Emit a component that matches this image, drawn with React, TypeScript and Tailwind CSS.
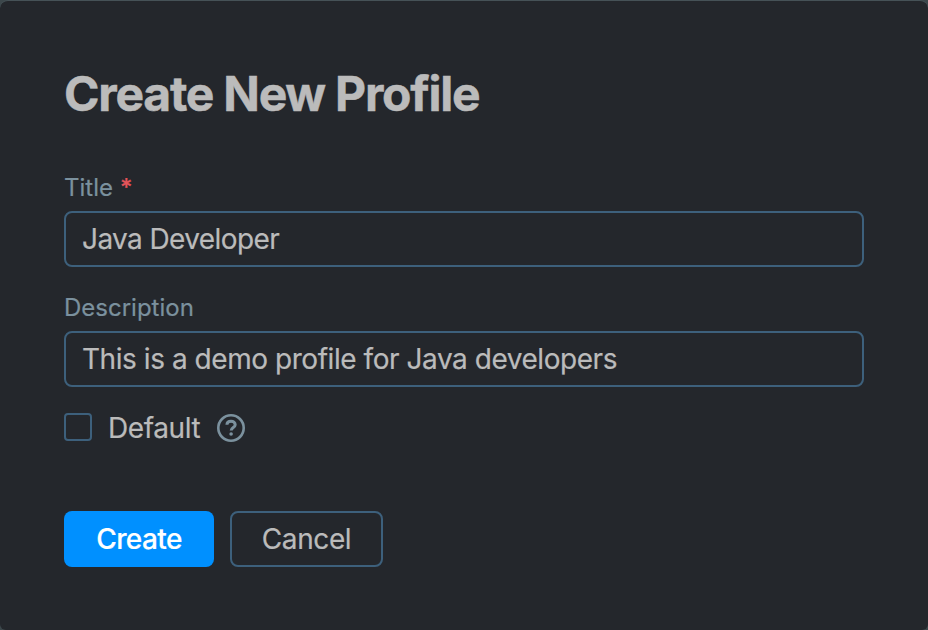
import { useState } from "react";

type TextFieldProps = {
  id: string;
  label: string;
  value: string;
  onChange: (value: string) => void;
  required?: boolean;
  inputClass: string;
};

function TextField({ id, label, value, onChange, required, inputClass }: TextFieldProps) {
  return (
    <div>
      <label htmlFor={id} className="block h-10 pt-px text-2xl leading-8 text-[#7b919e]">
        {label}
        {required && <span className="ml-[7px] font-medium tracking-tight text-[#e5545a]">*</span>}
      </label>
      <input
        id={id}
        value={value}
        onChange={(e) => onChange(e.target.value)}
        className={`block h-14 w-full rounded-lg border-2 border-[#3d607c] bg-transparent px-4 text-[28px] text-[#bbbbbb] outline-none ${inputClass}`}
      />
    </div>
  );
}

function HelpIcon() {
  return (
    <svg viewBox="0 0 28 28" className="size-7" fill="none" stroke="#7b919e" strokeWidth="2.6">
      <circle cx="14" cy="14" r="12.7" />
      <path d="M9.9 10.8c.1-2.1 1.7-3.6 4.1-3.6s4.2 1.4 4.2 3.5c0 2.9-4 2.7-4 5.8" strokeWidth="3" />
      <circle cx="14.1" cy="20" r="1.8" fill="#7b919e" stroke="none" />
    </svg>
  );
}

export default function App() {
  const [title, setTitle] = useState("Java Developer");
  const [description, setDescription] = useState("This is a demo profile for Java developers");
  const [isDefault, setIsDefault] = useState(false);

  return (
    <main className="h-screen bg-[#3c474b] font-['Inter',sans-serif] [-webkit-text-stroke:0.2px_currentColor]">
      <form
        onSubmit={(e) => e.preventDefault()}
        className="h-full overflow-hidden rounded-t-lg rounded-b-md border-t border-[#465257] bg-[#24272c] px-16 pt-[63px]"
      >
        <h1 className="h-[107px] text-5xl leading-[60px] font-bold tracking-[-1.23px] text-[#bbbbbb] [-webkit-text-stroke:0.5px_#bbbbbb]">
          Create New Profile
        </h1>

        <div className="flex flex-col gap-6">
          <TextField
            id="title"
            label="Title"
            value={title}
            onChange={setTitle}
            required
            inputClass="tracking-[-0.6px]"
          />
          <TextField
            id="description"
            label="Description"
            value={description}
            onChange={setDescription}
            inputClass="tracking-[-0.45px]"
          />
        </div>

        <div className="mt-5 flex h-10 items-center gap-[17px]">
          <label className="flex items-center gap-4 text-[28px] text-[#bbbbbb]">
            <input
              type="checkbox"
              checked={isDefault}
              onChange={(e) => setIsDefault(e.target.checked)}
              className="size-7 appearance-none rounded border-2 border-[#3d607c] checked:bg-[#0090ff]"
            />
            <span className="pt-0.5 tracking-[-0.4px]">Default</span>
          </label>
          <div className="pt-0.5">
            <HelpIcon />
          </div>
        </div>

        <div className="mt-16 flex gap-4 text-[28px]">
          <button type="submit" className="h-14 w-[150px] rounded-lg bg-[#0090ff] font-medium tracking-[-0.6px] text-white">
            Create
          </button>
          <button type="button" className="h-14 w-[153px] rounded-lg border-2 border-[#3d607c] tracking-[-0.4px] text-[#bbbbbb]">
            Cancel
          </button>
        </div>
      </form>
    </main>
  );
}
